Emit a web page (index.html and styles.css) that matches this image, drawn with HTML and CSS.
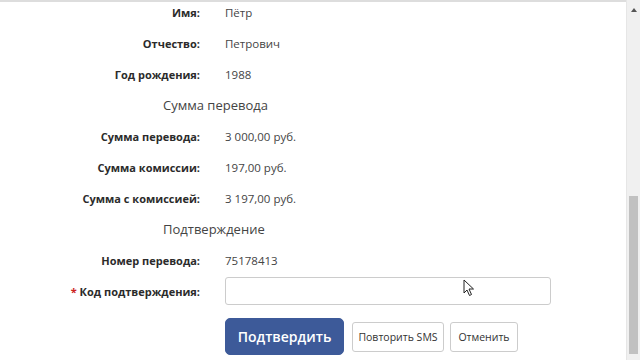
FILE: index.html
```html
<!DOCTYPE html>
<html lang="ru">
<head>
    <meta charset="UTF-8">
    <title>Подтверждение перевода</title>
    <link rel="stylesheet" href="styles.css">
</head>
<body>
    <div class="page">
        <div class="content">
            <div class="form">
                <div class="row"><span class="label">Имя:</span><span class="value">Пётр</span></div>
                <div class="row"><span class="label">Отчество:</span><span class="value">Петрович</span></div>
                <div class="row"><span class="label">Год рождения:</span><span class="value">1988</span></div>
                <div class="section">Сумма перевода</div>
                <div class="row"><span class="label">Сумма перевода:</span><span class="value">3 000,00 руб.</span></div>
                <div class="row"><span class="label">Сумма комиссии:</span><span class="value">197,00 руб.</span></div>
                <div class="row"><span class="label">Сумма с комиссией:</span><span class="value">3 197,00 руб.</span></div>
                <div class="section">Подтверждение</div>
                <div class="row"><span class="label">Номер перевода:</span><span class="value">75178413</span></div>
                <div class="row input-row">
                    <label class="label" for="code"><span class="required">*</span> Код подтверждения:</label>
                    <input id="code" class="code-input" type="text">
                </div>
                <div class="actions">
                    <button class="btn btn-primary">Подтвердить</button>
                    <button class="btn btn-sms">Повторить SMS</button>
                    <button class="btn btn-cancel">Отменить</button>
                </div>
            </div>
            <svg class="cursor" width="12" height="18" viewBox="0 0 12 18">
                <path d="M1 1 L1 14 L4 11 L6.5 16.5 L8.5 15.5 L6 10 L10.5 10 Z" fill="#fff" stroke="#222" stroke-width="1"/>
            </svg>
        </div>
        <div class="scrollbar">
            <div class="arrow"></div>
            <div class="thumb"></div>
        </div>
    </div>
</body>
</html>
```

FILE: styles.css
```css
body {
    margin: 0;
    font-family: 'Open Sans', 'Noto Sans', sans-serif;
    font-size: 11px;
    color: #333333;
    background-color: #ffffff;
}

.page {
    display: flex;
    height: 360px;
    overflow: hidden;
}

.content {
    position: relative;
    flex: 1;
    border-top: 2px solid #dddddd;
}

.form {
    margin-top: -5px;
}

.row {
    display: flex;
    align-items: center;
    height: 31px;
}

.label {
    width: 200px;
    text-align: right;
    font-weight: bold;
    color: #2b2b2b;
    flex-shrink: 0;
}

.required {
    color: #cc2222;
}

.value {
    margin-left: 25px;
    font-size: 11.5px;
    color: #444444;
}

.section {
    height: 31px;
    line-height: 31px;
    padding-left: 163px;
    font-size: 13px;
    color: #444444;
}

.input-row {
    height: 28px;
    margin-top: 1px;
}

.code-input {
    margin-left: 25px;
    width: 326px;
    height: 28px;
    box-sizing: border-box;
    border: 1px solid #cccccc;
    border-radius: 3px;
    padding: 4px 8px;
    font-family: inherit;
    font-size: 12px;
}

.actions {
    display: flex;
    align-items: center;
    margin-top: 13px;
    margin-left: 225px;
}

.btn {
    height: 30px;
    padding: 0;
    background-color: #ffffff;
    border: 1px solid #cccccc;
    border-radius: 3px;
    font-family: inherit;
    font-size: 10.5px;
    color: #333333;
}

.btn-primary {
    height: 37px;
    width: 119px;
    margin-right: 8px;
    background-color: #3d5a99;
    border-color: #3d5a99;
    border-radius: 5px;
    color: #ffffff;
    font-size: 14px;
    font-weight: 600;
}

.btn-sms {
    width: 92px;
    margin-right: 6px;
}

.btn-cancel {
    width: 68px;
}

.cursor {
    position: absolute;
    left: 463px;
    top: 277px;
}

.scrollbar {
    display: flex;
    flex-direction: column;
    width: 13px;
    background-color: #f0f0f0;
    border-left: 1px solid #e6e6e6;
}

.arrow {
    margin: 8px auto 0;
    width: 0;
    height: 0;
    border-left: 3px solid transparent;
    border-right: 3px solid transparent;
    border-bottom: 4px solid #555555;
}

.thumb {
    margin: 184px 2px 0;
    height: 158px;
    background-color: #c1c1c1;
}
```
